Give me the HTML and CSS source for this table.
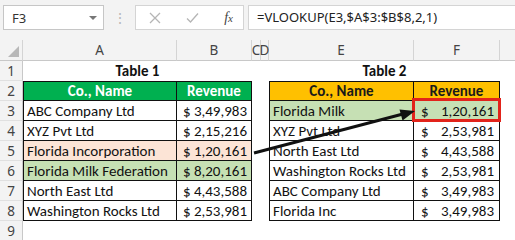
FILE: index.html
```html
<!DOCTYPE html>
<html>
<head>
<meta charset="utf-8">
<link rel="stylesheet" href="styles.css">
</head>
<body>
<div class="app">
  <div class="fbar">
    <div class="namebox"><span class="ref">F3</span><span class="dd"></span></div>
    <div class="grip">⋮</div>
    <div class="fnbox">
      <svg class="ico" width="12" height="12" viewBox="0 0 12 12"><path d="M1 1L11 11M11 1L1 11" stroke="#b5b5b5" stroke-width="1.3" fill="none"/></svg>
      <svg class="ico" width="13" height="12" viewBox="0 0 13 12"><path d="M1 6.5L4.5 10L12 1.5" stroke="#b5b5b5" stroke-width="1.3" fill="none"/></svg>
      <span class="fx"><i>f</i><span class="fxx">x</span></span>
    </div>
    <div class="formula">=VLOOKUP(E3,$A$3:$B$8,2,1)</div>
  </div>
  <div class="sheet">
    <div class="ch corner"><span class="tri"></span></div>
    <div class="ch">A</div><div class="ch">B</div><div class="ch">C</div><div class="ch">D</div><div class="ch">E</div><div class="ch">F</div><div class="ch last"></div>

    <div class="rh">1</div>
    <div class="c title span2">Table 1</div><div class="c"></div><div class="c"></div>
    <div class="c title span2">Table 2</div><div class="c"></div>

    <div class="rh">2</div>
    <div class="c t first top hg">Co., Name</div><div class="c t top hg">Revenue</div><div class="c"></div><div class="c"></div>
    <div class="c t first top ho">Co., Name</div><div class="c t top ho">Revenue</div><div class="c"></div>

    <div class="rh">3</div>
    <div class="c t first">ABC Company Ltd</div><div class="c t num">$ 3,49,983</div><div class="c"></div><div class="c"></div>
    <div class="c t first lg">Florida Milk</div><div class="c t acc lg sel"><span>$</span><span>1,20,161</span></div><div class="c"></div>

    <div class="rh">4</div>
    <div class="c t first">XYZ Pvt Ltd</div><div class="c t num">$ 2,15,216</div><div class="c"></div><div class="c"></div>
    <div class="c t first">XYZ Pvt Ltd</div><div class="c t acc"><span>$</span><span>2,53,981</span></div><div class="c"></div>

    <div class="rh">5</div>
    <div class="c t first pe">Florida Incorporation</div><div class="c t num pe">$ 1,20,161</div><div class="c"></div><div class="c"></div>
    <div class="c t first">North East Ltd</div><div class="c t acc"><span>$</span><span>4,43,588</span></div><div class="c"></div>

    <div class="rh">6</div>
    <div class="c t first lg">Florida Milk Federation</div><div class="c t num lg">$ 8,20,161</div><div class="c"></div><div class="c"></div>
    <div class="c t first">Washington Rocks Ltd</div><div class="c t acc"><span>$</span><span>2,53,981</span></div><div class="c"></div>

    <div class="rh">7</div>
    <div class="c t first">North East Ltd</div><div class="c t num">$ 4,43,588</div><div class="c"></div><div class="c"></div>
    <div class="c t first">ABC Company Ltd</div><div class="c t acc"><span>$</span><span>3,49,983</span></div><div class="c"></div>

    <div class="rh">8</div>
    <div class="c t first">Washington Rocks Ltd</div><div class="c t num">$ 2,53,981</div><div class="c"></div><div class="c"></div>
    <div class="c t first">Florida Inc</div><div class="c t acc"><span>$</span><span>3,49,983</span></div><div class="c"></div>

    <div class="rh">9</div>
    <div class="c"></div><div class="c"></div><div class="c"></div><div class="c"></div><div class="c"></div><div class="c"></div><div class="c"></div>
  </div>
  <svg class="arrow" width="515" height="240" viewBox="0 0 515 240">
    <line x1="254" y1="153" x2="403" y2="114" stroke="#111" stroke-width="3"/>
    <polygon points="415,111 399.5,109.5 402.5,120.5" fill="#111"/>
  </svg>
</div>
</body>
</html>
```

FILE: styles.css
```css
* { box-sizing: border-box; }
html, body { margin: 0; padding: 0; background: #fff; }
.app {
  position: relative;
  width: 515px;
  height: 240px;
  overflow: hidden;
  font-family: "Noto Sans", "Open Sans", sans-serif;
}
.fbar {
  height: 40px;
  background: #f3f3f3;
  display: flex;
  align-items: flex-start;
  padding: 5px 0 0 3px;
}
.namebox {
  width: 101px;
  height: 25px;
  background: #fff;
  border: 1px solid #c6c6c6;
  display: flex;
  align-items: center;
  justify-content: space-between;
  padding: 0 6px 0 8px;
  font-size: 13px;
  color: #333;
}
.dd {
  width: 0; height: 0;
  border-left: 4px solid transparent;
  border-right: 4px solid transparent;
  border-top: 4px solid #777;
}
.grip {
  width: 31px;
  text-align: center;
  color: #b8b8b8;
  font-size: 14px;
  line-height: 25px;
}
.fnbox {
  width: 109px;
  height: 25px;
  background: #fff;
  border: 1px solid #d4d4d4;
  display: flex;
  align-items: center;
  justify-content: space-between;
  padding: 0 10px 0 13px;
}
.fx { font-family: "Liberation Serif", serif; font-size: 14px; color: #444; }
.fx i { font-style: italic; }
.fxx { font-size: 11px; font-style: italic; }
.formula {
  flex: 1;
  margin-left: 4px;
  height: 25px;
  background: #fff;
  border: 1px solid #d4d4d4;
  border-right: none;
  padding-left: 8px;
  font-size: 13px;
  line-height: 23px;
  color: #222;
  white-space: nowrap;
}
.sheet {
  display: grid;
  grid-template-columns: 23px 154px 75px 9px 8px 145px 86px 1fr;
  grid-template-rows: 21px repeat(9, 20px);
}
.ch {
  background: #f3f3f3;
  border-right: 1px solid #d4d4d4;
  border-bottom: 1px solid #c8c8c8;
  font-size: 13.5px;
  color: #444;
  display: flex;
  align-items: center;
  justify-content: center;
}
.ch.last { border-right: none; }
.corner { position: relative; }
.tri {
  position: absolute;
  right: 3px; bottom: 3px;
  width: 0; height: 0;
  border-left: 11px solid transparent;
  border-bottom: 11px solid #b8b8b8;
}
.rh {
  background: #f3f3f3;
  border-right: 1px solid #c8c8c8;
  border-bottom: 1px solid #e0e0e0;
  font-size: 13.5px;
  color: #444;
  display: flex;
  align-items: center;
  justify-content: center;
}
.c {
  font-family: Carlito, Lato, "Liberation Sans", sans-serif;
  font-size: 15px;
  color: #111;
  white-space: nowrap;
  display: flex;
  align-items: center;
  padding: 0 3px;
}
.span2 { grid-column: span 2; }
.title { justify-content: center; font-weight: bold; }
.t { border-right: 1px solid #111; border-bottom: 1px solid #111; }
.first { border-left: 1px solid #111; }
.top { border-top: 1px solid #111; }
.hg { background: #00b050; color: #fff; font-weight: bold; justify-content: center; }
.ho { background: #ffc000; color: #1a1a1a; font-weight: bold; justify-content: center; }
.lg { background: #c6e0b4; }
.pe { background: #fce4d6; }
.num { justify-content: flex-end; padding-right: 4px; }
.acc { justify-content: space-between; padding: 0 5px 0 7px; }
.sel { position: relative; }
.sel::after {
  content: "";
  position: absolute;
  left: -2px; top: -3px; right: -2px; bottom: -2px;
  border: 3px solid #e2231a;
}
.arrow { position: absolute; left: 0; top: 0; pointer-events: none; }
```
